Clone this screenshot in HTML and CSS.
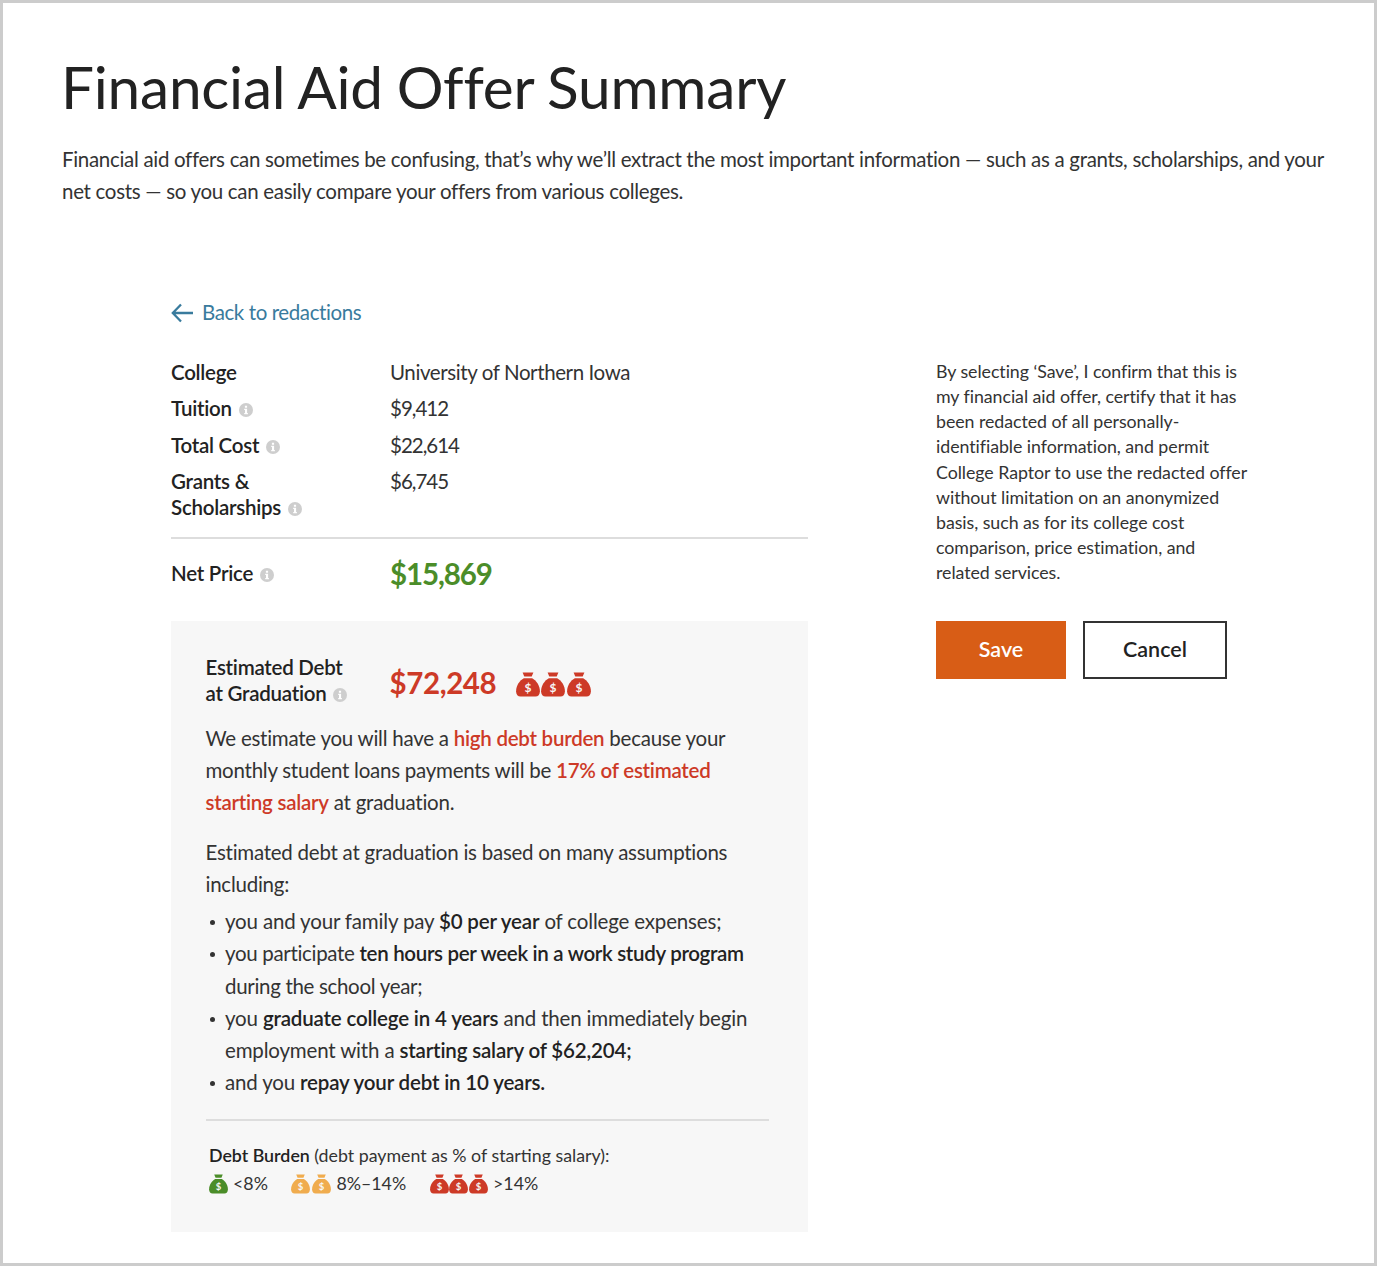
FILE: index.html
```
<!DOCTYPE html>
<html lang="en">
<head>
    <meta charset="UTF-8">
    <meta name="viewport" content="width=device-width, initial-scale=1.0">
    <title>Financial Aid Offer Summary</title>
    <link rel="stylesheet" href="styles.css">
</head>
<body>
    <svg class="sprite" width="0" height="0">
        <symbol id="bag" viewBox="0 0 24 25">
            <path d="M6.6.6h10.8l-1.7 4H8.300z"/>
            <path d="M7.800 6.300h8.400C20 8.300 23.900 13.500 23.900 19.200c0 3.600-1.800 5.400-4.400 5.400h-15C1.900 24.600.1 22.800.1 19.200.1 13.500 4 8.300 7.800 6.300z"/>
            <text class="dollar" x="12" y="19.800" text-anchor="middle">$</text>
        </symbol>
        <symbol id="info" viewBox="0 0 14 14">
            <circle cx="7" cy="7" r="7" fill="#cecece"/>
            <path d="M5.900 2.800h2.200v1.900H5.900zM5.200 5.700h2.900v4.200h.8v1.300H5.200V9.900H6V7h-.8z" fill="#fff"/>
        </symbol>
    </svg>

    <div class="page">
        <h1>Financial Aid Offer Summary</h1>
        <p class="intro">Financial aid offers can sometimes be confusing, that’s why we’ll extract the most important information — such as a grants, scholarships, and your<br>net costs — so you can easily compare your offers from various colleges.</p>

        <div class="columns">
            <div class="offer">
                <a class="back" href="#"><svg width="22" height="20" viewBox="0 0 22 20"><path d="M10 1.500L1.800 10l8.200 8.500M2 10h20" fill="none" stroke="currentColor" stroke-width="2.300"/></svg>Back to redactions</a>

                <div class="row"><b>College</b><span>University of Northern Iowa</span></div>
                <div class="row"><b>Tuition <svg class="info"><use href="#info"/></svg></b><span class="num">$9,412</span></div>
                <div class="row"><b>Total Cost <svg class="info"><use href="#info"/></svg></b><span class="num">$22,614</span></div>
                <div class="row"><b>Grants &amp;<br>Scholarships <svg class="info"><use href="#info"/></svg></b><span class="num">$6,745</span></div>

                <div class="row net"><b>Net Price <svg class="info"><use href="#info"/></svg></b><span class="amount green">$15,869</span></div>

                <div class="debt">
                    <div class="debt-head">
                        <b>Estimated Debt<br>at Graduation <svg class="info"><use href="#info"/></svg></b>
                        <span class="amount red">$72,248</span>
                        <span class="bags red"><svg><use href="#bag"/></svg><svg><use href="#bag"/></svg><svg><use href="#bag"/></svg></span>
                    </div>
                    <p>We estimate you will have a <b class="red">high debt burden</b> because your<br>monthly student loans payments will be <b class="red">17% of estimated<br>starting salary</b> at graduation.</p>
                    <p>Estimated debt at graduation is based on many assumptions<br>including:</p>
                    <ul>
                        <li>you and your family pay <b>$0 per year</b> of college expenses;</li>
                        <li class="tight">you participate <b>ten hours per week in a work study program</b><br>during the school year;</li>
                        <li>you <b>graduate college in 4 years</b> and then immediately begin<br>employment with a <b>starting salary of $62,204;</b></li>
                        <li>and you <b>repay your debt in 10 years.</b></li>
                    </ul>
                    <div class="legend">
                        <div><b>Debt Burden</b> (debt payment as % of starting salary):</div>
                        <div class="levels">
                            <span class="level"><span class="bags small green"><svg><use href="#bag"/></svg></span>&lt;8%</span>
                            <span class="level mid"><span class="bags small orange"><svg><use href="#bag"/></svg><svg><use href="#bag"/></svg></span>8%–14%</span>
                            <span class="level high"><span class="bags small red"><svg><use href="#bag"/></svg><svg><use href="#bag"/></svg><svg><use href="#bag"/></svg></span>&gt;14%</span>
                        </div>
                    </div>
                </div>
            </div>

            <div class="confirm">
                <p>By selecting ‘Save’, I confirm that this is<br>my financial aid offer, certify that it has<br>been redacted of all personally-<br>identifiable information, and permit<br>College Raptor to use the redacted offer<br>without limitation on an anonymized<br>basis, such as for its college cost<br>comparison, price estimation, and<br>related services.</p>
                <div class="buttons">
                    <button class="save">Save</button>
                    <button class="cancel">Cancel</button>
                </div>
            </div>
        </div>
    </div>
</body>
</html>
```
FILE: styles.css
```
* {
    box-sizing: border-box;
}
body {
    margin: 0;
    background: #fff;
    color: #333;
    font-family: Lato, sans-serif;
    font-size: 20.5px;
    line-height: 32.2px;
    letter-spacing: -0.25px;
    white-space: nowrap;
}
b {
    font-weight: 600;
    color: #222;
}
p, ul {
    margin: 0;
    padding: 0;
}
.sprite {
    display: none;
}
.page {
    height: 1266px;
    border: 3px solid #ccc;
    padding: 48px 0 0 59px;
    overflow: hidden;
}
h1 {
    margin: 0 0 22px -1px;
    color: #222;
    font-size: 58.5px;
    line-height: 70px;
    font-weight: 400;
    letter-spacing: -0.2px;
    word-spacing: -1px;
}
.intro {
    letter-spacing: -0.31px;
}
.columns {
    display: grid;
    grid-template-columns: 637px 310px;
    column-gap: 128px;
    padding: 89px 0 0 109px;
}
.back {
    display: flex;
    align-items: center;
    gap: 9px;
    margin-bottom: 31px;
    color: #397b9d;
    letter-spacing: -0.4px;
    text-decoration: none;
}
.row {
    display: grid;
    grid-template-columns: 219px 1fr;
    margin-bottom: 11px;
    line-height: 25.6px;
}
.row span {
    letter-spacing: -0.4px;
}
.row .num {
    letter-spacing: -1px;
}
.info {
    width: 14px;
    height: 14px;
    margin-left: 2px;
    vertical-align: -1px;
}
.net {
    align-items: center;
    height: 84px;
    margin: 16px 0 0;
    padding-bottom: 12px;
    border-top: 2px solid #ddd;
}
.amount {
    font-size: 29.5px;
    font-weight: 700;
}
.row .amount {
    letter-spacing: -1.1px;
}
.green {
    color: #4b8d29;
}
.red {
    color: #cd3a27;
}
.orange {
    color: #f0ac4e;
}
.debt {
    height: 611px;
    padding: 34px 39px 0 34.5px;
    background: #f7f7f7;
}
.debt-head {
    display: flex;
    align-items: center;
    height: 52px;
    margin-bottom: 15.5px;
    line-height: 25.6px;
}
.debt-head b {
    width: 184px;
}
.debt-head .amount {
    width: 107px;
    padding-top: 4px;
    letter-spacing: -0.4px;
}
.debt-head .bags {
    margin-left: 19.5px;
    padding-top: 8px;
}
.bags {
    display: flex;
    gap: 1.3px;
    fill: currentColor;
}
.bags svg {
    width: 24px;
    height: 25px;
}
.dollar {
    fill: #f7f7f7;
    font-size: 12px;
    font-weight: 700;
    letter-spacing: 0;
}
.bags.small svg {
    width: 19px;
    height: 20px;
}
.debt p {
    margin-bottom: 17.5px;
}
.debt ul {
    margin-top: -13px;
    list-style: none;
    letter-spacing: -0.17px;
}
.debt li {
    padding-left: 19.5px;
}
.debt .tight {
    letter-spacing: -0.32px;
}
.debt li::before {
    content: "";
    float: left;
    width: 5px;
    height: 5px;
    margin: 15px 0 0 -15.5px;
    border-radius: 50%;
    background: #333;
}
.legend {
    margin-top: 20.5px;
    padding: 21.5px 3.5px 0;
    border-top: 2px solid #ddd;
    font-size: 17.8px;
    line-height: 27.5px;
    letter-spacing: 0;
}
.levels, .level {
    display: flex;
    align-items: center;
}
.levels {
    gap: 23.5px;
}
.level {
    gap: 5px;
}
.mid .bags {
    gap: 2px;
}
.high .bags {
    gap: 0.7px;
}
.confirm {
    padding-top: 62.5px;
    font-size: 17.8px;
    line-height: 25.15px;
    letter-spacing: -0.05px;
}
.buttons {
    display: flex;
    gap: 17px;
    margin-top: 36px;
}
button {
    height: 58px;
    padding: 0 0 2px;
    font-family: inherit;
    font-size: 21.5px;
    font-weight: 600;
}
.save {
    width: 130px;
    border: 0;
    background: #d85d16;
    color: #fff;
}
.cancel {
    width: 144px;
    border: 2px solid #333;
    background: #fff;
    color: #222;
}
```
